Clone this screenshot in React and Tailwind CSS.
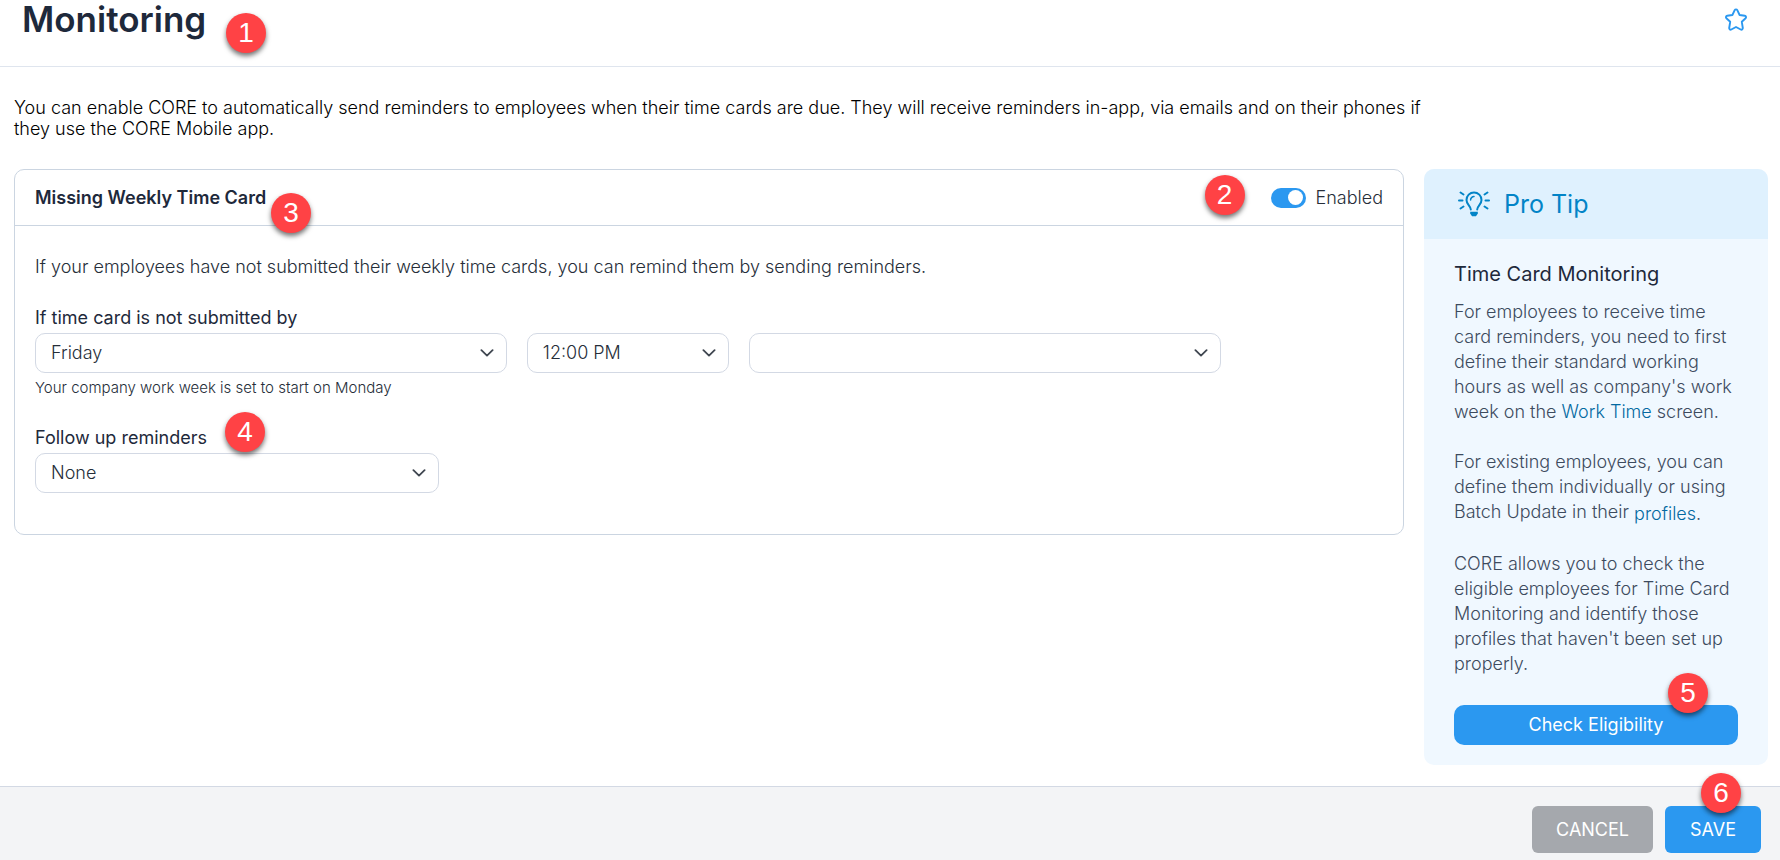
import React, { useState } from 'react'

const Badge = ({ n, className }) => (
  <span
    className={`absolute z-10 flex justify-center items-center bg-[#ff4245] rounded-full w-10 h-10 font-['Liberation_Sans',sans-serif] font-normal text-[28px] text-white leading-10 shadow-[0_3px_5px_rgba(0,0,0,0.55)] ${className}`}
  >{n}</span>
)

const Select = ({ options, className, ...props }) => (
  <div className={`relative ${className}`}>
    <select
      className="bg-white px-[15px] border border-[#d3d9e4] rounded-[10px] w-full h-10 font-light text-[#262e39] text-lg appearance-none"
      {...props}
    >
      {options.map((option) => <option key={option}>{option}</option>)}
    </select>
    <svg
      className="top-4 right-[13px] absolute w-3.5 h-2 text-[#3f4650] pointer-events-none"
      viewBox="0 0 14 8" fill="none" stroke="currentColor" strokeWidth="1.8"
      strokeLinecap="round" strokeLinejoin="round"
    >
      <path d="M1.4 1.2 7 6.6l5.6-5.4" />
    </svg>
  </div>
)

const BulbIcon = () => (
  <svg className="w-8 h-[26px]" viewBox="0 0 32 26" fill="none" stroke="currentColor" strokeWidth="2" strokeLinecap="round" strokeLinejoin="round">
    <path d="M12.8 18.5c0-3.2-4.3-4.8-4.3-9.6a7.500 7.500 0 0 1 15 0c0 4.800-4.300 6.400-4.300 9.600" />
    <path d="M12.600 9a3.400 3.400 0 0 1 3.400-3.400" strokeWidth="1.500" />
    <path d="M12.200 20.800h7.600v1.700l-1.800 2.700h-4l-1.800-2.700z" fill="currentColor" stroke="none" />
    <path d="M1 9.500h3.500M27.500 9.500H31M2.500 1.500l3 2M29.500 1.500l-3 2M2.500 17.500l3-2M29.500 17.500l-3-2" />
  </svg>
)

const StarIcon = () => (
  <svg className="w-6 h-6" viewBox="0 0 24 24" fill="none" stroke="currentColor" strokeWidth="1.9" strokeLinejoin="round">
    <path d="M10.700 2.200a1.450 1.450 0 0 1 2.600 0l2.300 4.800 5.200.7a1.450 1.450 0 0 1 .8 2.500l-3.800 3.600 1 6.200a1.450 1.450 0 0 1-2.100 1.500L12 19l-4.700 2.500a1.450 1.450 0 0 1-2.100-1.500l1-6.200-3.800-3.600a1.450 1.450 0 0 1 .8-2.500l5.200-.7z" />
  </svg>
)

export default function App() {
  const [enabled, setEnabled] = useState(true)
  const [day, setDay] = useState("Friday")
  const [time, setTime] = useState("12:00 PM")
  const [zone, setZone] = useState("")
  const [followUp, setFollowUp] = useState("None")

  return (
    <div className="flex flex-col bg-white min-h-screen font-['Inter',sans-serif] font-light text-[#262e39] text-lg">
      <header className="flex justify-between items-start pr-8 pb-7 pl-[22px] border-[#dfe5ee] border-b">
        <h1 className="relative font-semibold text-[#1e293b] text-[35px] leading-[38px]">
          Monitoring
          <Badge n="1" className="top-[13px] left-[204px]" />
        </h1>
        <button type="button" aria-label="Add to favorites" className="pt-2 text-[#2b98f0]">
          <StarIcon />
        </button>
      </header>

      <main className="flex-1 pt-[30px] pr-3 pb-[21px] pl-3.5">
        <p className="mb-[30px] max-w-[1420px] text-black leading-[21px]">
          You can enable CORE to automatically send reminders to employees when their time cards are due. They will receive reminders in-app, via emails and on their phones if they use the CORE Mobile app.
        </p>

        <div className="flex items-start gap-5">
          <section className="flex-1 border border-[#cbd5e1] rounded-[10px]">
            <div className="flex justify-between items-center px-5 border-[#cbd5e1] border-b h-14">
              <h2 className="relative font-semibold text-[#1e293b]">
                Missing Weekly Time Card
                <Badge n="3" className="top-[9px] left-[236px]" />
              </h2>
              <label className="relative flex items-center gap-2.5">
                <Badge n="2" className="-top-[9px] -left-[66px]" />
                <input
                  type="checkbox"
                  role="switch"
                  checked={enabled}
                  onChange={(e) => setEnabled(e.target.checked)}
                  className="peer sr-only"
                />
                <span className="flex items-center bg-gray-300 peer-checked:bg-[#2b98f0] px-[3px] rounded-full w-[35px] h-5 peer-checked:justify-end">
                  <span className="bg-white rounded-full w-[15px] h-[15px]"></span>
                </span>
                Enabled
              </label>
            </div>

            <div className="px-5 pt-[29px] pb-[41px] leading-6">
              <p className="mb-[27px]">If your employees have not submitted their weekly time cards, you can remind them by sending reminders.</p>

              <label htmlFor="day" className="block mb-[3px] font-normal text-[#1e293b]">If time card is not submitted by</label>
              <div className="flex gap-5">
                <Select id="day" className="w-[35%]" value={day} onChange={(e) => setDay(e.target.value)} options={["Friday", "Saturday", "Sunday"]} />
                <Select aria-label="Time" className="w-[15%]" value={time} onChange={(e) => setTime(e.target.value)} options={["12:00 PM", "1:00 PM", "2:00 PM"]} />
                <Select aria-label="Time zone" className="w-[35%]" value={zone} onChange={(e) => setZone(e.target.value)} options={[""]} />
              </div>
              <p className="mt-[3px] mb-[26px] text-[15px] leading-6">Your company work week is set to start on Monday</p>

              <label htmlFor="followUp" className="block relative mb-[3px] w-fit font-normal text-[#1e293b]">
                Follow up reminders
                <Badge n="4" className="-top-[14px] left-[190px]" />
              </label>
              <Select id="followUp" className="w-[30%]" value={followUp} onChange={(e) => setFollowUp(e.target.value)} options={["None", "1 day later", "2 days later"]} />
            </div>
          </section>

          <aside className="bg-[#f0f8ff] rounded-[10px] w-[344px] overflow-hidden text-[#3d4b5e] shrink-0">
            <div className="flex items-center gap-3.5 bg-[#dff1fe] px-[34px] h-[70px] text-[#0284c7]">
              <BulbIcon />
              <h2 className="font-normal text-[25px]">Pro Tip</h2>
            </div>
            <div className="p-[30px] pt-[22px] pb-5">
              <h3 className="mb-3 font-normal text-[#1e293b] text-xl leading-[26px]">Time Card Monitoring</h3>
              <div className="space-y-[25px] leading-[25px]">
                <p>
                  For employees to receive time card reminders, you need to first define their standard working hours as well as company's work week on the <a href="#work-time" className="text-[#0369a1]">Work Time</a> screen.
                </p>
                <p>
                  For existing employees, you can define them individually or using Batch Update in their <span className="inline-block align-middle"><a href="#profiles" className="text-[#0369a1]">profiles</a>.</span>
                </p>
                <p>
                  CORE allows you to check the eligible employees for Time Card Monitoring and identify those profiles that haven't been set up properly.
                </p>
              </div>
              <button type="button" className="relative bg-[#2b98f0] mt-[29px] rounded-[10px] w-full h-10 font-normal text-white">
                Check Eligibility
                <Badge n="5" className="-top-8 right-[30px]" />
              </button>
            </div>
          </aside>
        </div>
      </main>

      <footer className="flex justify-end gap-3 bg-[#f3f4f6] pt-[19px] pr-[19px] pb-[7px] border-[#d3d9e4] border-t">
        <button type="button" className="bg-[#a5a8ad] px-6 rounded-md h-[47px] font-normal text-white">CANCEL</button>
        <button type="button" className="relative bg-[#2b98f0] px-[25px] rounded-md h-[47px] font-normal text-white">
          SAVE
          <Badge n="6" className="-top-[33px] left-9" />
        </button>
      </footer>
    </div>
  )
}
